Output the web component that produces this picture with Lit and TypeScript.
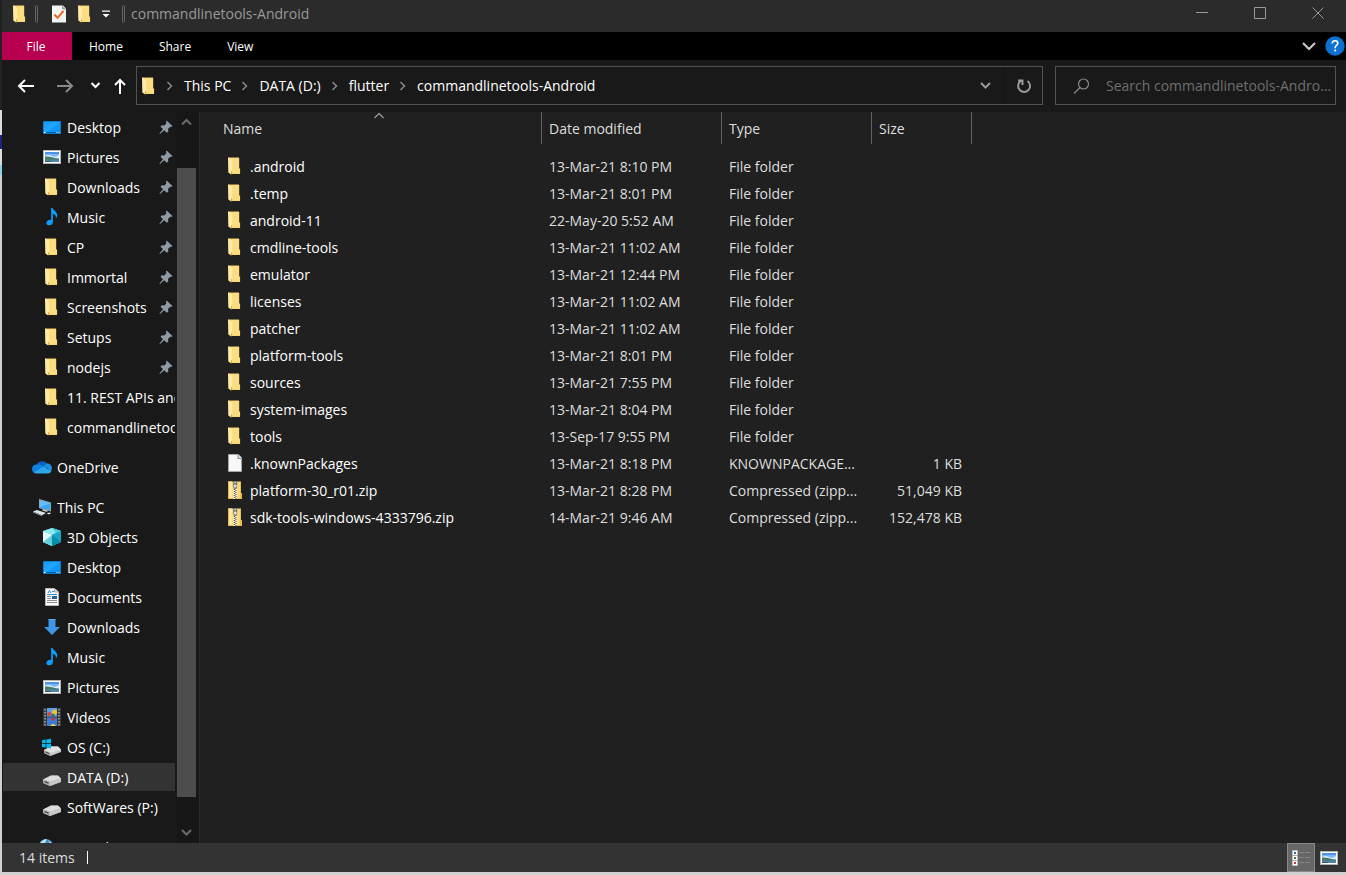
import { LitElement, html, svg, css, nothing } from "lit";
import { customElement, property, state } from "lit/decorators.js";
import { classMap } from "lit/directives/class-map.js";

const icons: Record<string, unknown> = {
  folder: svg`
    <path d="M2 .5h11v14l1 .2V17H6z" fill="#f3cf68"/>
    <path d="M6 1h7.2v10.6h.9V16.500H6z" fill="#fbdc7e"/>
    <path d="M2 .5l3.300 1.200q.9.4.9 1.300v10.500l-1 1.500v2.500L2.300 15.600z" fill="#ffeaa8"/>
    <path d="M5.200 15h.9v2.500l-.9-.4z" fill="#e9bb4a"/>`,
  desktop: svg`
    <defs><linearGradient id="dk" x1="0" y1="0" x2="1" y2="1"><stop offset="0" stop-color="#1398f5"/><stop offset=".5" stop-color="#26a9ff"/><stop offset=".51" stop-color="#119bfb"/><stop offset="1" stop-color="#0a8ff0"/></linearGradient></defs>
    <rect x="0" y="3" width="18" height="13" fill="#0b6fbd"/>
    <rect x=".7" y="3.700" width="16.600" height="11.600" fill="url(#dk)"/>
    <path d="M1 14.500h16" stroke="#0a5f9e"/><path d="M1 14.500h1.500M13.500 14.500h1M15.500 14.500h1" stroke="#fff"/>`,
  pictures: svg`
    <rect x=".5" y="2.500" width="17" height="13" fill="#fff" stroke="#b4b4b4"/>
    <rect x="2" y="4" width="14" height="10" fill="#7db7f5"/>
    <path d="M2 4h14v2H2z" fill="#4f93e8"/>
    <path d="M2 8q4-2 7 0t7-1v3H2z" fill="#d3ebf8"/>
    <path d="M2 8.500c4-.5 8 1 14 2.500v1H2z" fill="#4b7a63"/>
    <path d="M2 11.500h14V14H2z" fill="#4e86a8"/><path d="M2 13h6v1H2z" fill="#2f5848"/>`,
  music: svg`
    <path d="M8.200 0h1.600c.5 2.700 4.700 3.700 4.400 7.400-.1 1.400-.7 2.300-1.400 3 .6-2.600-.8-4-2.900-4.400V14c0 1.900-1.400 3.300-3.500 3.300-1.900 0-3-1-3-2.400 0-1.800 1.700-3.200 3.700-3.200.4 0 .8 0 1.100.2z" fill="#109dfa"/>`,
  cube: svg`
    <path d="M9 0l9 3v11l-9 4-9-4V3z" fill="#2fb8cf"/>
    <path d="M9 0l9 3-9 4-9-4z" fill="#8ee6ef"/><path d="M9 0l9 3-5 2z" fill="#45cbe0"/>
    <path d="M0 3l9 4v11l-9-4z" fill="#e1f8fa"/><path d="M0 14l9-7v11z" fill="#63cfdd"/>
    <path d="M18 3L9 7v11l9-4z" fill="#15a7c4"/><path d="M18 14L9 7v11z" fill="#078ea9"/>`,
  documents: svg`
    <path d="M2.500.5h9l4 3.500v13.500h-13z" fill="#fafafa" stroke="#b9b9b9"/>
    <path d="M11.500.5V4h4" fill="#ddd" stroke="#a9a9a9"/>
    <path d="M5 5l1.500-2.500L8 5M9 3.500h2" fill="none" stroke="#2a8fd4"/>
    <path d="M4 6.500h10" stroke="#2a8fd4"/>
    <path d="M4 8.500h4M4 10.500h4M4 12.500h10M4 14.500h10" stroke="#8a8f94"/>
    <rect x="9" y="8" width="5" height="3" fill="#26618f"/>`,
  download: svg`<path d="M5.500 1h7v8H17l-8 8-8-8h4.500z" fill="#3e95e6"/><path d="M5.500 1h7v1h-7z" fill="#5aaaf0"/>`,
  videos: svg`
    <path d="M0 0h18v18H0z" fill="#3a3a3a"/>
    <path d="M2 1v17M16 1v17" stroke="#8f8f8f" stroke-width="2" stroke-dasharray="1.500 1.500"/>
    <rect x="4" y="0" width="10" height="8.500" fill="#5c9be6"/><rect x="4" y="9.500" width="10" height="8.500" fill="#3e7bd6"/>
    <circle cx="11.500" cy="4" r="2.600" fill="#e8c53c"/><circle cx="6.500" cy="6" r="2" fill="#d9463e"/>
    <path d="M8 8l2-3 2 3z" fill="#33793f"/><path d="M7 12l3-2.500 3 1-2 2z" fill="#b83a4a"/><path d="M7 18q3-4 6 0z" fill="#e8d64a"/>`,
  drive: svg`
    <path d="M0 11.500L8 7.500h7l3 3v3.500L7 18l-7-3z" fill="#8f8f8f"/>
    <path d="M0 11.500L8 7.500h7l3 3-11 3.500z" fill="#dcdcdc"/>
    <path d="M0 11.500l7 2.500v4l-7-3z" fill="#b3b3b3"/><path d="M1.500 13l4 1.500v1.300l-4-1.500z" fill="#3b3b3b"/>
    <path d="M7 14l11-3.500V14L7 18z" fill="#c9c9c9"/>`,
  osdrive: svg`
    <path d="M1 12L8 8.500h7l3 3v2.500L7.500 18 1 15z" fill="#c9c9c9"/>
    <path d="M1 12L8 8.500h7l3 3-10.500 3.500z" fill="#e2e2e2"/>
    <path d="M1 12l6.500 3v3L1 15z" fill="#aaa"/><path d="M2.500 13.500l3.500 1.500v1L2.500 14.500z" fill="#3b3b3b"/>
    <path d="M-1 2.200l3.600-.6v3.600H-1zM3.300 1.500L8 .8v4.400H3.300zM-1 6h3.600v3.600L-1 9zM3.300 6H8v4.400l-4.700-.7z" fill="#0bb7f2"/>`,
  onedrive: svg`
    <path d="M4.500 7A6 5.500 0 0 1 15 5.500L16 9 8 12z" fill="#0b62b8"/>
    <path d="M4.500 6.500C1.500 6.500 0 8.500 0 11c0 1.700.8 3 2 3.700L14.500 9 9 7C7.500 6.300 6 6.300 4.500 6.500z" fill="#1283dc"/>
    <path d="M15 5.500c3 0 5 2 5 5L19 13l-7-5c.8-1.600 1.800-2.500 3-2.500z" fill="#1a90e2"/>
    <path d="M1.500 14.500L10 9.500q1.500-.8 3 0l6.500 3.300C19 14.500 17.500 15.500 16 15.500H4.500c-1.200 0-2.200-.4-3-1z" fill="#2ba6ec"/>`,
  pc: svg`
    <path d="M7 1l12 3.500v9L7 10z" fill="#8fa9b8"/><path d="M8 2.300l10.200 3v7L8 9.200z" fill="#38a6f5"/>
    <path d="M8 2.300l10.200 3L8 9.200z" fill="#64bcfa"/>
    <path d="M11 11l5 1.500-1 1.500-5-1.500z" fill="#b7c1c7"/>
    <path d="M1 13.500l4-1.500 9 3-4 2.200z" fill="#dfe4e8"/><path d="M1 13.500l9 3.700v1L1 14.500z" fill="#97a1a8"/>
    <path d="M15 15l3-.5 1 1-3 .9z" fill="#dfe4e8"/>`,
  network: svg`
    <circle cx="14" cy="8" r="7" fill="#3e8fc0"/><path d="M8 5q3-4 7-4l-2 4-3 2z" fill="#b9dff0"/><path d="M16 2l4 3-2 1z" fill="#9ed0e8"/>`,
  file: svg`
    <path d="M2.500.5h10l3 3v14h-13z" fill="#f7f7f7" stroke="#a6a6a6"/><path d="M12 1v3.500h3.500" fill="#d8d8d8" stroke="#8f8f8f"/>`,
  zip: svg`
    <path d="M2 .5h13v17H2z" fill="#f8da78"/><path d="M2 .5h4v17H2z" fill="#ffe9a2"/><path d="M2.500 1v16.500H15" fill="none" stroke="#e2bb45"/>
    <path d="M14 12h2v6h-2z" fill="#e7bd49"/><path d="M14.500 1v11" stroke="#e6c252"/>
    <path d="M7.200 0h4v5.500l-1 2.500h-2l-1-2.500z" fill="#777"/><path d="M8.500 1.500h1.500M8.500 4h1.500v2H8.500z" stroke="#e6e6e6" fill="#ddd"/>
    <path d="M9.200 8v10" stroke="#fff6d5" stroke-width="4"/><path d="M8.500 8v10" stroke="#555" stroke-width="1.500" stroke-dasharray="1 1"/><path d="M10 9v9" stroke="#777" stroke-width="1.500" stroke-dasharray="1 1"/>`,
  checkdoc: svg`
    <path d="M2 .5h11l3 3v14H2z" fill="#f4f4f4"/><path d="M12.500.5v3.500H16" fill="#bbb" stroke="#8c8c8c" stroke-width=".8"/>
    <path d="M4.500 9.500l3 3.300 6-7" fill="none" stroke="#f0641e" stroke-width="2"/>`,
  pin: svg`
    <path d="M9.500 2.500l6 5.500-1.300 1-1-.3-2.200 2.300.3 2.500-1.500 1.300-2.600-2.600L3 16l-.6-.4 3.600-4.400L3.500 8.700l1.300-1.500 2.600.3 2-2.200-.4-1.500z" fill="#8f9ba4"/>`,
  details: svg`
    <path d="M1.500 1.500h5v15h-5z" fill="#fff" stroke="#bdbdbd"/><path d="M1 6.500h6M1 11.500h6" stroke="#aaa"/>
    <path d="M3 3h2v2H3z" fill="#24699f"/><path d="M3 8h2v2H3z" fill="#457b3e"/><path d="M3 13h2v2H3z" fill="#c8332d"/>
    <path d="M8 3.500h5M14 3.500h5M8 8.500h5M14 8.500h5M8 13.500h5M14 13.500h5" stroke="#858585"/>`,
};

const wideIcons = new Set(["onedrive", "pc", "network", "details"]);

const icon = (name: string) => {
  const w = wideIcons.has(name) ? 20 : 18;
  return html`<svg class="icon" width=${w} height="18" viewBox="0 0 ${w} 18" aria-hidden="true">${icons[name]}</svg>`;
};

const stroke = (w: number, h: number, d: string, width = 1) =>
  html`<svg class="icon" width=${w} height=${h} viewBox="0 0 ${w} ${h}" fill="none" stroke="currentColor" stroke-width=${width} aria-hidden="true"><path d=${d}/></svg>`;

const CHEVRON_DOWN = "M1 1l4.500 4.500L10 1";

@customElement("title-bar")
class TitleBar extends LitElement {
  @property() heading = "";

  static styles = css`
    :host { display: flex; justify-content: space-between; height: 32px; background: #2b2b2b; color: #999; }
    .quick, .controls { display: flex; align-items: center; }
    .quick { padding: 0 0 4px 9px; }
    button { display: flex; align-items: center; justify-content: center; border: 0; padding: 0; background: none; color: inherit; font: inherit; }
    .icon { overflow: visible; flex: none; }
    .bar { box-sizing: border-box; width: 3px; height: 18px; border: 1px solid #666; border-radius: 2px; }
    .first { margin: 0 12px 0 6px; }
    .next { margin-left: 8px; }
    .menu { margin: 0 12px 0 8px; color: #fff; }
    h1 { margin: 0 0 0 6px; font-size: 14px; font-weight: 400; line-height: 20px; }
    .controls { gap: 2px; padding-bottom: 6px; }
    .controls button { width: 56px; height: 26px; }
  `;

  render() {
    return html`
      <div class="quick">
        ${icon("folder")}
        <span class="bar first"></span>
        <button aria-label="Properties">${icon("checkdoc")}</button>
        <button class="next" aria-label="New folder">${icon("folder")}</button>
        <button class="menu" aria-label="Customize Quick Access Toolbar">
          <svg class="icon" width="8" height="8" viewBox="0 0 8 8"><path d="M0 .5h8v1.200H0zM.5 4h7L4 7.500z" fill="#fff"/></svg>
        </button>
        <span class="bar"></span>
        <h1>${this.heading}</h1>
      </div>
      <div class="controls">
        <button aria-label="Minimize">${stroke(12, 12, "M0 5.500h12")}</button>
        <button aria-label="Maximize">${stroke(12, 12, "M.5.5h11v11H.5z")}</button>
        <button aria-label="Close">${stroke(12, 12, "M.5.5l11 11M11.500.5l-11 11")}</button>
      </div>`;
  }
}

@customElement("ribbon-bar")
class RibbonBar extends LitElement {
  static styles = css`
    :host { display: flex; justify-content: space-between; height: 28px; background: #000; }
    nav, .tools { display: flex; align-items: center; }
    button { display: flex; align-items: center; justify-content: center; height: 28px; border: 0; padding: 1px 19px 0 17px; background: none; color: #fff; font: inherit; font-size: 12px; }
    .file { width: 70px; background: #b7004f; }
    .tools { gap: 9px; padding-right: 1px; }
    .tools button { padding: 0; color: #ccc; }
    .icon { flex: none; }
  `;

  render() {
    return html`
      <nav aria-label="Ribbon">
        <button class="file">File</button>
        ${["Home", "Share", "View"].map((t) => html`<button>${t}</button>`)}
      </nav>
      <div class="tools">
        <button aria-label="Expand the Ribbon">${stroke(14, 10, "M1 2l6 6 6-6", 2)}</button>
        <button aria-label="Help">
          <svg class="icon" width="20" height="20" viewBox="0 0 20 20">
            <circle cx="10" cy="10" r="9.700" fill="#0c71cf"/>
            <path d="M7.200 7.500Q7.300 4.800 10 4.800t2.800 2.500c0 2-2.600 2.100-2.600 4.200v.7" fill="none" stroke="#fff" stroke-width="1.600"/>
            <circle cx="10.200" cy="14.500" r="1.100" fill="#fff"/>
          </svg>
        </button>
      </div>`;
  }
}

@customElement("address-row")
class AddressRow extends LitElement {
  @property({ attribute: false }) path: string[] = [];

  static styles = css`
    :host { display: flex; align-items: center; height: 52px; box-sizing: border-box; padding: 0 10px 1px 15px; background: #191919; color: #fff; }
    button { display: flex; align-items: center; border: 0; padding: 0; background: none; color: inherit; font: inherit; }
    .icon { flex: none; overflow: visible; }
    .history { display: flex; align-items: center; margin-right: 9px; }
    .forward { margin: 0 17px 0 21px; color: #8a8a8a; }
    .up { margin-left: 13px; }
    .address, .search { box-sizing: border-box; display: flex; align-items: center; height: 39px; border: 1px solid #535353; }
    .address { flex: 1; min-width: 0; padding-left: 3px; margin-right: 12px; }
    ol { display: flex; flex: 1; align-items: center; min-width: 0; margin: 0; padding: 0; list-style: none; }
    li { display: flex; align-items: center; white-space: nowrap; }
    .sep { display: flex; margin: 0 11px 0 10px; color: #8a8a8a; }
    li:first-child .sep { margin-left: 8px; }
    .tool { justify-content: center; height: 37px; width: 38px; color: #999; }
    .refresh { border-left: 1px solid #141414; }
    .search { flex: 0 1 281px; gap: 16px; padding-left: 17px; color: #8a8a8a; }
    input { flex: 1; min-width: 0; border: 0; padding: 0; outline: 0; background: none; color: #fff; font: inherit; }
    input::placeholder { color: #6f6f6f; opacity: 1; }
  `;

  render() {
    return html`
      <div class="history">
        <button aria-label="Back">${stroke(18, 14, "M17 7H2M8 1L2 7l6 6", 2)}</button>
        <button class="forward" aria-label="Forward">${stroke(18, 14, "M1 7h15M10 1l6 6-6 6", 2)}</button>
        <button aria-label="Recent locations">${stroke(9, 7, "M.5 1l4 4 4-4", 2)}</button>
        <button class="up" aria-label="Up">${stroke(14, 18, "M7 17V3M2 8l5-5 5 5", 2)}</button>
      </div>
      <div class="address">
        ${icon("folder")}
        <ol>
          ${this.path.map((p) => html`
            <li><span class="sep">${stroke(7, 10, "M1.500 1l4 4-4 4", 1.5)}</span><button>${p}</button></li>`)}
        </ol>
        <button class="tool" aria-label="Previous locations">${stroke(11, 8, CHEVRON_DOWN, 2)}</button>
        <button class="tool refresh" aria-label="Refresh">${stroke(14, 14, "M4 1.800A6 6 0 1 0 10.500 2M1 1.500h4.500V6", 2)}</button>
      </div>
      <label class="search">
        ${stroke(17, 16, "M15.500 6a5 5 0 1 1-10 0 5 5 0 0 1 10 0zM7 9.500L1 15.500", 1.2)}
        <input type="text" aria-label="Search" placeholder="Search commandlinetools-Andro..." />
      </label>`;
  }
}

interface NavItem { label: string; icon: string; pinned?: boolean; }
interface NavGroup { root?: NavItem; items: NavItem[]; }

const navGroups: NavGroup[] = [
  { items: [
    { label: "Desktop", icon: "desktop", pinned: true },
    { label: "Pictures", icon: "pictures", pinned: true },
    { label: "Downloads", icon: "folder", pinned: true },
    { label: "Music", icon: "music", pinned: true },
    { label: "CP", icon: "folder", pinned: true },
    { label: "Immortal", icon: "folder", pinned: true },
    { label: "Screenshots", icon: "folder", pinned: true },
    { label: "Setups", icon: "folder", pinned: true },
    { label: "nodejs", icon: "folder", pinned: true },
    { label: "11. REST APIs and", icon: "folder" },
    { label: "commandlinetools", icon: "folder" },
  ] },
  { root: { label: "OneDrive", icon: "onedrive" }, items: [] },
  { root: { label: "This PC", icon: "pc" }, items: [
    { label: "3D Objects", icon: "cube" },
    { label: "Desktop", icon: "desktop" },
    { label: "Documents", icon: "documents" },
    { label: "Downloads", icon: "download" },
    { label: "Music", icon: "music" },
    { label: "Pictures", icon: "pictures" },
    { label: "Videos", icon: "videos" },
    { label: "OS (C:)", icon: "osdrive" },
    { label: "DATA (D:)", icon: "drive" },
    { label: "SoftWares (P:)", icon: "drive" },
  ] },
  { root: { label: "Network", icon: "network" }, items: [] },
];

@customElement("nav-pane")
class NavPane extends LitElement {
  @state() private selected = "DATA (D:)";

  static styles = css`
    :host { display: flex; min-height: 0; background: #191919; color: #fff; }
    nav { flex: 1; min-width: 0; overflow: hidden; display: flex; flex-direction: column; gap: 10px; padding: 0 2px 0 1px; }
    ul { margin: 0; padding: 0; list-style: none; }
    button { display: flex; align-items: center; gap: 6px; width: 100%; height: 30px; border: 0; border-top: 1px solid transparent; border-bottom: 1px solid transparent; padding: 0 0 0 40px; background: none; background-clip: padding-box; color: inherit; font: inherit; text-align: left; white-space: nowrap; }
    .root { gap: 5px; padding-left: 29px; }
    .on { background-color: #333; }
    .label { flex: 1; min-width: 0; overflow: hidden; padding-top: 2px; }
    .icon { flex: none; overflow: visible; }
    .pin { display: flex; }
    .scroll { display: flex; flex-direction: column; width: 19px; padding-right: 3px; background: #171717; color: #6b6b6b; }
    .scroll button { justify-content: center; height: 20px; padding: 0; flex: none; }
    .before { flex: 36; }
    .thumb { flex: 628; background: #4d4d4d; }
    .after { flex: 26; }
  `;

  private row(item: NavItem, root = false) {
    const on = item.label === this.selected;
    return html`
      <button class=${classMap({ root, on })} aria-current=${on ? "true" : nothing} @click=${() => (this.selected = item.label)}>
        ${icon(item.icon)}<span class="label">${item.label}</span>
        ${item.pinned ? html`<span class="pin">${icon("pin")}</span>` : nothing}
      </button>`;
  }

  render() {
    return html`
      <nav aria-label="Navigation pane">
        ${navGroups.map((g) => html`
          <ul>
            ${g.root ? html`<li>${this.row(g.root, true)}</li>` : nothing}
            ${g.items.map((i) => html`<li>${this.row(i)}</li>`)}
          </ul>`)}
      </nav>
      <div class="scroll">
        <button aria-label="Scroll up">${stroke(11, 8, "M1 6.500L5.500 2 10 6.500", 2)}</button>
        <span class="before"></span><span class="thumb"></span><span class="after"></span>
        <button aria-label="Scroll down">${stroke(11, 8, CHEVRON_DOWN, 2)}</button>
      </div>`;
  }
}

type Row = [icon: string, name: string, date: string, type: string, size: string];

const rows: Row[] = [
  ["folder", ".android", "13-Mar-21 8:10 PM", "File folder", ""],
  ["folder", ".temp", "13-Mar-21 8:01 PM", "File folder", ""],
  ["folder", "android-11", "22-May-20 5:52 AM", "File folder", ""],
  ["folder", "cmdline-tools", "13-Mar-21 11:02 AM", "File folder", ""],
  ["folder", "emulator", "13-Mar-21 12:44 PM", "File folder", ""],
  ["folder", "licenses", "13-Mar-21 11:02 AM", "File folder", ""],
  ["folder", "patcher", "13-Mar-21 11:02 AM", "File folder", ""],
  ["folder", "platform-tools", "13-Mar-21 8:01 PM", "File folder", ""],
  ["folder", "sources", "13-Mar-21 7:55 PM", "File folder", ""],
  ["folder", "system-images", "13-Mar-21 8:04 PM", "File folder", ""],
  ["folder", "tools", "13-Sep-17 9:55 PM", "File folder", ""],
  ["file", ".knownPackages", "13-Mar-21 8:18 PM", "KNOWNPACKAGE...", "1 KB"],
  ["zip", "platform-30_r01.zip", "13-Mar-21 8:28 PM", "Compressed (zipp...", "51,049 KB"],
  ["zip", "sdk-tools-windows-4333796.zip", "14-Mar-21 9:46 AM", "Compressed (zipp...", "152,478 KB"],
];

@customElement("file-list")
class FileList extends LitElement {
  static styles = css`
    :host { display: block; min-width: 0; overflow: hidden; border-left: 1px solid #2b2b2b; padding-left: 16px; background: #202020; color: #dedede; }
    table { table-layout: fixed; width: 756px; border-collapse: separate; border-spacing: 0; }
    .name { width: 326px; }
    .date { width: 180px; }
    .type { width: 150px; }
    .size { width: 100px; }
    th { position: relative; height: 32px; box-sizing: border-box; border-right: 1px solid #636363; padding: 0; font-weight: 400; }
    th button { width: 100%; height: 32px; border: 0; padding: 2px 0 0 7px; background: none; color: inherit; font: inherit; text-align: left; }
    .sort { position: absolute; top: 0; left: 0; right: 0; display: flex; justify-content: center; color: #a0a0a0; }
    tbody::before { content: ""; display: block; height: 9px; }
    td { height: 27px; padding: 0 0 0 7px; white-space: nowrap; }
    td:first-child { padding-left: 10px; color: #fff; }
    td:last-child { padding-right: 10px; text-align: right; }
    .entry { display: flex; align-items: center; gap: 6px; }
    .entry .icon { margin-bottom: 2px; }
    .icon { flex: none; overflow: visible; }
  `;

  render() {
    return html`
      <table>
        <thead>
          <tr>
            <th class="name" aria-sort="ascending"><span class="sort">${stroke(10, 7, "M.5 6L5 1.500 9.500 6", 1.2)}</span><button>Name</button></th>
            <th class="date"><button>Date modified</button></th>
            <th class="type"><button>Type</button></th>
            <th class="size"><button>Size</button></th>
          </tr>
        </thead>
        <tbody>
          ${rows.map(([kind, name, date, type, size]) => html`
            <tr>
              <td><span class="entry">${icon(kind)}<span>${name}</span></span></td>
              <td>${date}</td><td>${type}</td><td>${size}</td>
            </tr>`)}
        </tbody>
      </table>`;
  }
}

@customElement("status-bar")
class StatusBar extends LitElement {
  static styles = css`
    :host { display: flex; align-items: center; justify-content: space-between; height: 29px; padding: 0 3px 0 17px; background: #333; color: #dedede; }
    .count { display: flex; align-items: center; gap: 12px; }
    .count::after { content: ""; width: 1px; height: 13px; background: #fff; }
    .views { display: flex; }
    button { box-sizing: border-box; display: flex; align-items: center; justify-content: center; width: 28px; height: 29px; border: 1px solid transparent; padding: 0; background: none; }
    .active { border-color: #8a8a8a; background: #666; }
    .icon { flex: none; }
  `;

  render() {
    return html`
      <span class="count">${rows.length} items</span>
      <div class="views">
        <button class="active" aria-label="Details view">${icon("details")}</button>
        <button aria-label="Thumbnail view">${icon("pictures")}</button>
      </div>`;
  }
}

@customElement("app-root")
class AppRoot extends LitElement {
  static styles = css`
    :host {
      display: grid; grid-template-rows: auto auto auto minmax(0, 1fr) auto; box-sizing: border-box; height: 100vh; padding: 0 0 3px 2px;
      background: linear-gradient(#222 0 110px, #dcdcdc 110px 135px, #1a237e 135px 149px, #dcdcdc 149px 165px, #8fd0ea 165px 175px, #d0d0d0 175px);
      font: 14px/20px "Open Sans", "Noto Sans", sans-serif;
    }
    main { display: grid; grid-template-columns: 197px minmax(0, 1fr); min-height: 0; }
  `;

  render() {
    return html`
      <title-bar heading="commandlinetools-Android"></title-bar>
      <ribbon-bar></ribbon-bar>
      <address-row .path=${["This PC", "DATA (D:)", "flutter", "commandlinetools-Android"]}></address-row>
      <main>
        <nav-pane></nav-pane>
        <file-list></file-list>
      </main>
      <status-bar></status-bar>`;
  }
}
